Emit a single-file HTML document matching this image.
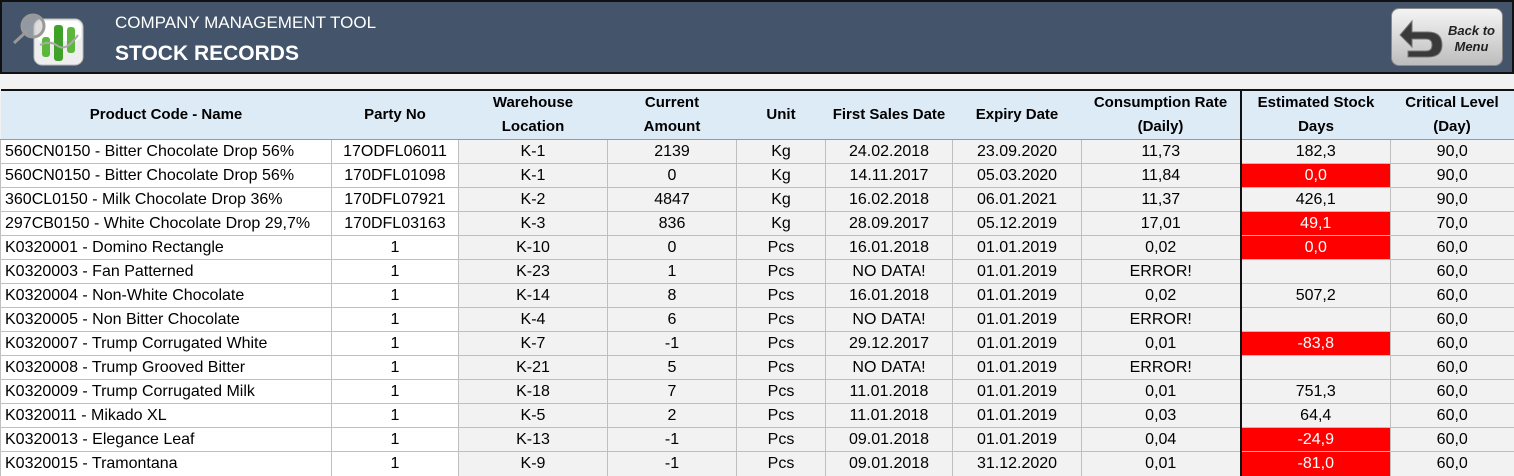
<!DOCTYPE html>
<html><head><meta charset="utf-8"><style>
*{margin:0;padding:0;box-sizing:border-box}
body{width:1514px;height:474px;overflow:hidden;background:#f2f2f2;font-family:"Liberation Sans",sans-serif;position:relative}
.hdr{position:absolute;left:0;top:0;width:1514px;height:74px;background:#44546a;border:2px solid #111}
.t1{position:absolute;left:113px;top:11px;color:#fff;font-size:17px}
.t2{position:absolute;left:113px;top:40px;color:#fff;font-size:21px;font-weight:bold}
table{position:absolute;left:0;top:89px;border-collapse:collapse;table-layout:fixed;width:1514px;border-right:2px solid #111}
td,th{font-size:16px;height:24px;padding:0 4px;border:1px solid #bfbfbf;text-align:center;white-space:nowrap;color:#000;background:#f2f2f2}
th{background:#ddebf7;font-size:15px;height:48px;line-height:24px;border-top:2px solid #111;border-bottom:1px solid #999;border-left:none;border-right:none}
td.l{text-align:left}
.w{background:#fff}
th.bk,td.bk{border-left:2px solid #111}
td.r{background:#ff0000;color:#fff}
tr:last-child td{border-bottom:none}
</style></head><body>
<div class="hdr">
<svg style="position:absolute;left:8px;top:8px" width="80" height="58">
<rect x="24" y="9" width="49" height="46" rx="8" fill="#eee" stroke="#bbb"/>
<rect x="26" y="11" width="45" height="20" rx="6" fill="#fff"/>
<rect x="32" y="27" width="8" height="20" rx="3" fill="#5cb83a"/>
<rect x="44" y="15" width="9" height="36" rx="3" fill="#3fa02a"/>
<rect x="57" y="17" width="8" height="26" rx="3" fill="#5cb83a"/>
<path d="M30 35 Q40 30 48 36 T68 25" stroke="#aaa" stroke-width="2" fill="none"/>
<line x1="4" y1="33" x2="16" y2="22" stroke="#999" stroke-width="3"/>
<circle cx="23" cy="16" r="11" fill="rgba(200,200,200,.6)" stroke="#999" stroke-width="3"/>
</svg>
<div class="t1">COMPANY MANAGEMENT TOOL</div>
<div class="t2">STOCK RECORDS</div>
<div style="position:absolute;left:1389px;top:6px;width:112px;height:58px;border-radius:8px;background:linear-gradient(#f4f4f4,#bdbdbd);border:1px solid #888">
<svg style="position:absolute;left:6px;top:8px" width="50" height="42"><path d="M14 4 L2 18 L14 30 L14 22 L28 22 Q34 22 34 28 Q34 34 28 34 L10 34 L10 40 L30 40 Q44 40 44 28 Q44 15 30 15 L14 15 Z" fill="#3a3a3a" stroke="#777"/></svg>
<div style="position:absolute;left:56px;top:14px;font-size:13px;font-style:italic;font-weight:bold;color:#222;text-align:center;line-height:16px">Back to<br>Menu</div>
</div>
</div>
<table>
<colgroup><col style="width:331px"><col style="width:127px"><col style="width:149px"><col style="width:129px"><col style="width:89px"><col style="width:127px"><col style="width:129px"><col style="width:159px"><col style="width:150px"><col style="width:124px"></colgroup>
<tr><th>Product Code - Name</th><th>Party No</th><th>Warehouse<br>Location</th><th>Current<br>Amount</th><th>Unit</th><th>First Sales Date</th><th>Expiry Date</th><th>Consumption Rate<br>(Daily)</th><th class="bk">Estimated Stock<br>Days</th><th>Critical Level<br>(Day)</th></tr>
<tr><td class="l w">560CN0150 - Bitter Chocolate Drop 56%</td><td class="w">17ODFL06011</td><td>K-1</td><td>2139</td><td>Kg</td><td>24.02.2018</td><td>23.09.2020</td><td>11,73</td><td class="bk">182,3</td><td>90,0</td></tr>
<tr><td class="l w">560CN0150 - Bitter Chocolate Drop 56%</td><td class="w">170DFL01098</td><td>K-1</td><td>0</td><td>Kg</td><td>14.11.2017</td><td>05.03.2020</td><td>11,84</td><td class="bk r">0,0</td><td>90,0</td></tr>
<tr><td class="l w">360CL0150 - Milk Chocolate Drop 36%</td><td class="w">170DFL07921</td><td>K-2</td><td>4847</td><td>Kg</td><td>16.02.2018</td><td>06.01.2021</td><td>11,37</td><td class="bk">426,1</td><td>90,0</td></tr>
<tr><td class="l w">297CB0150 - White Chocolate Drop 29,7%</td><td class="w">170DFL03163</td><td>K-3</td><td>836</td><td>Kg</td><td>28.09.2017</td><td>05.12.2019</td><td>17,01</td><td class="bk r">49,1</td><td>70,0</td></tr>
<tr><td class="l w">K0320001 - Domino Rectangle</td><td class="w">1</td><td>K-10</td><td>0</td><td>Pcs</td><td>16.01.2018</td><td>01.01.2019</td><td>0,02</td><td class="bk r">0,0</td><td>60,0</td></tr>
<tr><td class="l w">K0320003 - Fan Patterned</td><td class="w">1</td><td>K-23</td><td>1</td><td>Pcs</td><td>NO DATA!</td><td>01.01.2019</td><td>ERROR!</td><td class="bk"></td><td>60,0</td></tr>
<tr><td class="l w">K0320004 - Non-White Chocolate</td><td class="w">1</td><td>K-14</td><td>8</td><td>Pcs</td><td>16.01.2018</td><td>01.01.2019</td><td>0,02</td><td class="bk">507,2</td><td>60,0</td></tr>
<tr><td class="l w">K0320005 - Non Bitter Chocolate</td><td class="w">1</td><td>K-4</td><td>6</td><td>Pcs</td><td>NO DATA!</td><td>01.01.2019</td><td>ERROR!</td><td class="bk"></td><td>60,0</td></tr>
<tr><td class="l w">K0320007 - Trump Corrugated White</td><td class="w">1</td><td>K-7</td><td>-1</td><td>Pcs</td><td>29.12.2017</td><td>01.01.2019</td><td>0,01</td><td class="bk r">-83,8</td><td>60,0</td></tr>
<tr><td class="l w">K0320008 - Trump Grooved Bitter</td><td class="w">1</td><td>K-21</td><td>5</td><td>Pcs</td><td>NO DATA!</td><td>01.01.2019</td><td>ERROR!</td><td class="bk"></td><td>60,0</td></tr>
<tr><td class="l w">K0320009 - Trump Corrugated Milk</td><td class="w">1</td><td>K-18</td><td>7</td><td>Pcs</td><td>11.01.2018</td><td>01.01.2019</td><td>0,01</td><td class="bk">751,3</td><td>60,0</td></tr>
<tr><td class="l w">K0320011 - Mikado XL</td><td class="w">1</td><td>K-5</td><td>2</td><td>Pcs</td><td>11.01.2018</td><td>01.01.2019</td><td>0,03</td><td class="bk">64,4</td><td>60,0</td></tr>
<tr><td class="l w">K0320013 - Elegance Leaf</td><td class="w">1</td><td>K-13</td><td>-1</td><td>Pcs</td><td>09.01.2018</td><td>01.01.2019</td><td>0,04</td><td class="bk r">-24,9</td><td>60,0</td></tr>
<tr><td class="l w">K0320015 - Tramontana</td><td class="w">1</td><td>K-9</td><td>-1</td><td>Pcs</td><td>09.01.2018</td><td>31.12.2020</td><td>0,01</td><td class="bk r">-81,0</td><td>60,0</td></tr>
</table>
</body></html>
